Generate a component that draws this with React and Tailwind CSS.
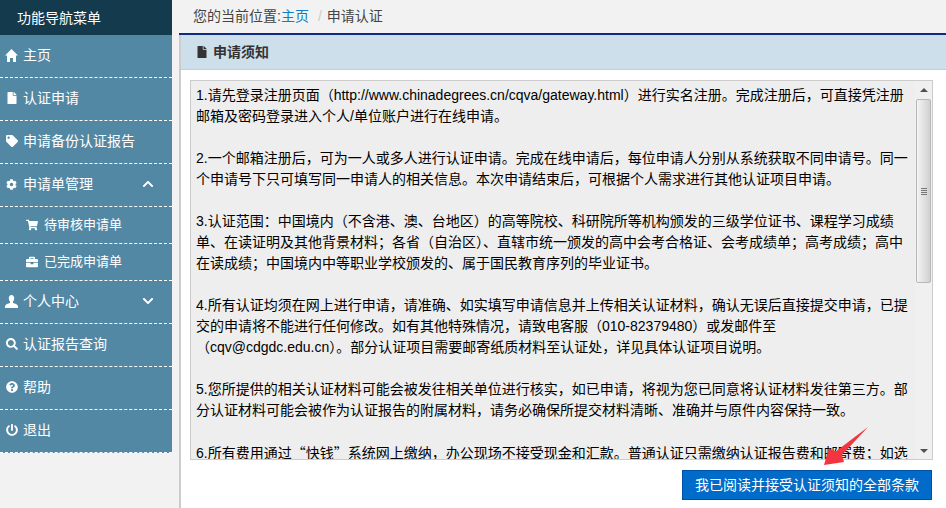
import {
  FaFile,
  FaTag,
  FaCog,
  FaShoppingCart,
  FaBriefcase,
  FaSearch,
  FaQuestionCircle,
  FaPowerOff,
  FaChevronUp,
  FaChevronDown,
} from "react-icons/fa";

const font = "[font-family:'Liberation_Sans','Noto_Sans_CJK_SC',sans-serif]";

const HomeIcon = ({ className }) => (
  <svg className={className} viewBox="0 0 13 13" fill="currentColor">
    <path d="M6.5 0 L13 6.5 H11 V13 H8 V9 H5 V13 H2 V6.5 H0 Z" />
  </svg>
);

const UserIcon = ({ className }) => (
  <svg className={className} viewBox="0 0 13 13" fill="currentColor">
    <path d="M6.5 0 C8.3 0 9.2 1.4 9.2 3.2 C9.2 5 8.4 6 8 6.6 V8 C10 8.6 12.5 9.4 13 11 V13 H0 V11 C0.5 9.4 3 8.6 5 8 V6.6 C4.6 6 3.8 5 3.8 3.2 C3.8 1.4 4.7 0 6.5 0 Z" />
  </svg>
);

const menu = [
  { label: "主页", icon: HomeIcon, size: "w-[13px] h-[13px]" },
  { label: "认证申请", icon: FaFile, size: "w-[10px] h-[12px]" },
  { label: "申请备份认证报告", icon: FaTag, size: "w-[12px] h-[12px]" },
  { label: "申请单管理", icon: FaCog, size: "w-[11px] h-[11px]", chevron: FaChevronUp },
  { label: "待审核申请单", icon: FaShoppingCart, sub: true },
  { label: "已完成申请单", icon: FaBriefcase, sub: true },
  { label: "个人中心", icon: UserIcon, size: "w-[13px] h-[13px]", chevron: FaChevronDown },
  { label: "认证报告查询", icon: FaSearch, size: "w-[12px] h-[12px]" },
  { label: "帮助", icon: FaQuestionCircle, size: "w-[12px] h-[12px]" },
  { label: "退出", icon: FaPowerOff, size: "w-[12px] h-[12px]" },
];

const lines = [
  "1.请先登录注册页面（http://www.chinadegrees.cn/cqva/gateway.html）进行实名注册。完成注册后，可直接凭注册",
  "邮箱及密码登录进入个人/单位账户进行在线申请。",
  "",
  "2.一个邮箱注册后，可为一人或多人进行认证申请。完成在线申请后，每位申请人分别从系统获取不同申请号。同一",
  "个申请号下只可填写同一申请人的相关信息。本次申请结束后，可根据个人需求进行其他认证项目申请。",
  "",
  "3.认证范围：中国境内（不含港、澳、台地区）的高等院校、科研院所等机构颁发的三级学位证书、课程学习成绩",
  "单、在读证明及其他背景材料；各省（自治区）、直辖市统一颁发的高中会考合格证、会考成绩单；高考成绩；高中",
  "在读成绩；中国境内中等职业学校颁发的、属于国民教育序列的毕业证书。",
  "",
  "4.所有认证均须在网上进行申请，请准确、如实填写申请信息并上传相关认证材料，确认无误后直接提交申请，已提",
  "交的申请将不能进行任何修改。如有其他特殊情况，请致电客服（010-82379480）或发邮件至",
  "（cqv@cdgdc.edu.cn）。部分认证项目需要邮寄纸质材料至认证处，详见具体认证项目说明。",
  "",
  "5.您所提供的相关认证材料可能会被发往相关单位进行核实，如已申请，将视为您已同意将认证材料发往第三方。部",
  "分认证材料可能会被作为认证报告的附属材料，请务必确保所提交材料清晰、准确并与原件内容保持一致。",
  "",
  <>
    6.所有费用通过<span className="[font-family:'Noto_Sans_CJK_SC',sans-serif]">“快钱”</span>
    系统网上缴纳，办公现场不接受现金和汇款。普通认证只需缴纳认证报告费和邮寄费；如选
  </>,
];

const MenuItem = ({ item }) => {
  const Icon = item.icon;
  const Chevron = item.chevron;
  return (
    <div
      className={`flex items-center text-white border-b border-dashed border-white ${
        item.sub ? "h-[37px] pl-[26px] text-[13px]" : "h-[43px] pl-[5px] pb-[2px] text-sm"
      }`}
    >
      {item.sub ? (
        <Icon className="w-3 h-3 mr-[6px]" />
      ) : (
        <span className="w-[13px] mr-[5px] flex justify-center">
          <Icon className={item.size} />
        </span>
      )}
      <span className="flex-1">{item.label}</span>
      {Chevron && <Chevron className="w-[12px] h-[12px] mr-[18px]" />}
    </div>
  );
};

const App = () => {
  return (
    <div className={`flex w-[946px] h-[508px] overflow-hidden bg-white ${font}`}>
      {/* Sidebar */}
      <div className="w-[181px] h-full shrink-0 bg-[#f2f2f2] border-r-2 border-[#cccccc]">
        <div className="w-[172px]">
          <div className="h-[35px] pl-[17px] flex items-center text-sm text-white bg-[#143a4e]">功能导航菜单</div>
          <div className="bg-[#5388a5]">
            {menu.map((item) => (
              <MenuItem key={item.label} item={item} />
            ))}
          </div>
        </div>
      </div>

      {/* Main */}
      <div className="flex-1 flex flex-col min-w-0">
        <div className="h-[35px] shrink-0 ml-[-2px] flex items-center pl-[14px] pb-[2px] text-sm text-[#444444] bg-[#f2f2f2] border-b-[2px] border-[#0f2a80]">
          <span>您的当前位置:</span>
          <span className="text-[#0a7fc4]">主页</span>
          <span className="text-[#cccccc] ml-[9px] mr-[5px]">/</span>
          <span>申请认证</span>
        </div>
        <div className="h-[35px] shrink-0 flex items-center pl-[16px] text-sm font-bold text-[#333333] bg-[#cddfea] border-b border-[#c8cdd0]">
          <FaFile className="w-[10px] h-[12px] mr-[6px]" />
          申请须知
        </div>
        <div className="relative flex-1 min-h-0 pt-[10px]">
          <div className="flex ml-[9px] w-[743px] h-[380px] bg-[#eeeeee] border border-[#cccccc] overflow-hidden">
            <div className="flex-1 min-w-0 pl-[5px] pt-[4px] text-sm leading-[21px] text-black whitespace-nowrap overflow-hidden">
              {lines.map((line, i) => (
                <div key={i} className="h-[21px]">
                  {line}
                </div>
              ))}
            </div>
            {/* Scrollbar */}
            <div className="w-[17px] shrink-0 flex flex-col bg-[#f0f0f0]">
              <div className="h-[18px] flex items-center justify-center">
                <div className="w-0 h-0 border-x-[4px] border-x-transparent border-b-[4px] border-b-[#505050]" />
              </div>
              <div className="h-[184px] mx-px rounded-[2px] border border-[#b8b8b8] bg-gradient-to-r from-[#f4f4f4] to-[#d0d0d0] flex flex-col items-center justify-center gap-px">
                <div className="w-[6px] h-px bg-[#777777]" />
                <div className="w-[6px] h-px bg-[#777777]" />
                <div className="w-[6px] h-px bg-[#777777]" />
                <div className="w-[6px] h-px bg-[#777777]" />
              </div>
              <div className="flex-1" />
              <div className="h-[17px] flex items-center justify-center">
                <div className="w-0 h-0 border-x-[4px] border-x-transparent border-t-[4px] border-t-[#505050]" />
              </div>
            </div>
          </div>
          <div className="flex justify-end mt-[10px] mr-[14px]">
            <button className="w-[250px] h-[30px] text-sm text-white bg-[#006bc9] border border-[#0050a8]">
              我已阅读并接受认证须知的全部条款
            </button>
          </div>
          {/* Red annotation arrow */}
          <svg className="absolute left-[634px] top-[350px]" width="60" height="52" viewBox="0 0 60 52">
            <path d="M53 7 L27 35 L29 42 L9 45 L14 28 L20 32 Z" fill="#f2353f" />
          </svg>
        </div>
      </div>
    </div>
  );
};

export default App;
